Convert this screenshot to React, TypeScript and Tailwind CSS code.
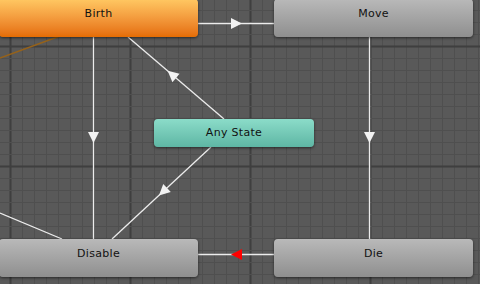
import React from 'react';

type Pt = [number, number];

const W = 480;
const H = 284;

// grid offsets taken from the screenshot: minor every 12px, major every 120px
const vLines = Array.from({ length: 42 }, (_, i) => -2 + i * 12);
const hLines = Array.from({ length: 26 }, (_, i) => -2 + i * 12);

function Arrow({ base, dir, fill = '#f2f2f2' }: { base: Pt; dir: Pt; fill?: string }) {
  const len = Math.hypot(dir[0], dir[1]);
  const ux = dir[0] / len;
  const uy = dir[1] / len;
  const tip: Pt = [base[0] + ux * 11, base[1] + uy * 11];
  const l: Pt = [base[0] - uy * 5.5, base[1] + ux * 5.5];
  const r: Pt = [base[0] + uy * 5.5, base[1] - ux * 5.5];
  return <polygon points={`${tip.join(',')} ${l.join(',')} ${r.join(',')}`} fill={fill} />;
}

function Edge({ from, to }: { from: Pt; to: Pt }) {
  return <line x1={from[0]} y1={from[1]} x2={to[0]} y2={to[1]} stroke="#ececec" strokeWidth={1.3} />;
}

function Node({
  label,
  className,
  tone,
}: {
  label: string;
  className: string;
  tone: 'orange' | 'grey' | 'teal';
}) {
  const bg =
    tone === 'orange'
      ? 'bg-gradient-to-b from-[#ffc862] to-[#e46c02]'
      : tone === 'teal'
        ? 'bg-gradient-to-b from-[#8bdcc9] to-[#5eb6a4]'
        : 'bg-gradient-to-b from-[#b9b9b9] to-[#8f8f8f]';
  return (
    <div
      className={`absolute rounded-[4px] shadow-[0_1px_3px_rgba(0,0,0,0.55)] flex justify-center ${bg} ${className}`}
    >
      <span className="text-[11px] tracking-[0.3px] text-[#111111] font-['DejaVu_Sans',sans-serif]">{label}</span>
    </div>
  );
}

export default function App() {
  return (
    <div className="relative w-[480px] h-[284px] overflow-hidden bg-[#595959]">
      <svg className="absolute inset-0" width={W} height={H}>
        {vLines.map((x) => (
          <line
            key={'v' + x}
            x1={x + 0.5}
            y1={0}
            x2={x + 0.5}
            y2={H}
            stroke={(x - 10) % 120 === 0 ? '#3f3f3f' : '#4f4f4f'}
            strokeWidth={(x - 10) % 120 === 0 ? 2 : 1}
          />
        ))}
        {hLines.map((y) => (
          <line
            key={'h' + y}
            x1={0}
            y1={y + 0.5}
            x2={W}
            y2={y + 0.5}
            stroke={(y - 46) % 120 === 0 ? '#3f3f3f' : '#4f4f4f'}
            strokeWidth={(y - 46) % 120 === 0 ? 2 : 1}
          />
        ))}

        {/* transitions */}
        <line x1={0} y1={58} x2={60} y2={36} stroke="#96621a" strokeWidth={1.4} />
        <Edge from={[197, 23.5]} to={[274, 23.5]} />
        <Arrow base={[231, 23.5]} dir={[1, 0]} />

        <Edge from={[93.5, 37]} to={[93.5, 239]} />
        <Arrow base={[93.5, 132]} dir={[0, 1]} />

        <Edge from={[369.5, 37]} to={[369.5, 239]} />
        <Arrow base={[369.5, 132]} dir={[0, 1]} />

        <Edge from={[224, 119]} to={[128, 37]} />
        <Arrow base={[176, 78]} dir={[-96, -82]} />

        <Edge from={[211, 147]} to={[112, 239]} />
        <Arrow base={[167, 188]} dir={[-99, 92]} />

        <Edge from={[0, 213]} to={[62, 239]} />

        <Edge from={[197, 254.5]} to={[274, 254.5]} />
        <Arrow base={[242, 254.5]} dir={[-1, 0]} fill="#ff0000" />
      </svg>

      <Node label="Birth" tone="orange" className="left-[-1px] top-[-1px] w-[199px] h-[38px] pt-[7px]" />
      <Node label="Move" tone="grey" className="left-[274px] top-[-1px] w-[199px] h-[38px] pt-[7px]" />
      <Node label="Any State" tone="teal" className="left-[154px] top-[119px] w-[160px] h-[28px] items-center" />
      <Node label="Disable" tone="grey" className="left-[-1px] top-[239px] w-[199px] h-[38px] pt-[7px]" />
      <Node label="Die" tone="grey" className="left-[274px] top-[239px] w-[199px] h-[38px] pt-[7px]" />
    </div>
  );
}
